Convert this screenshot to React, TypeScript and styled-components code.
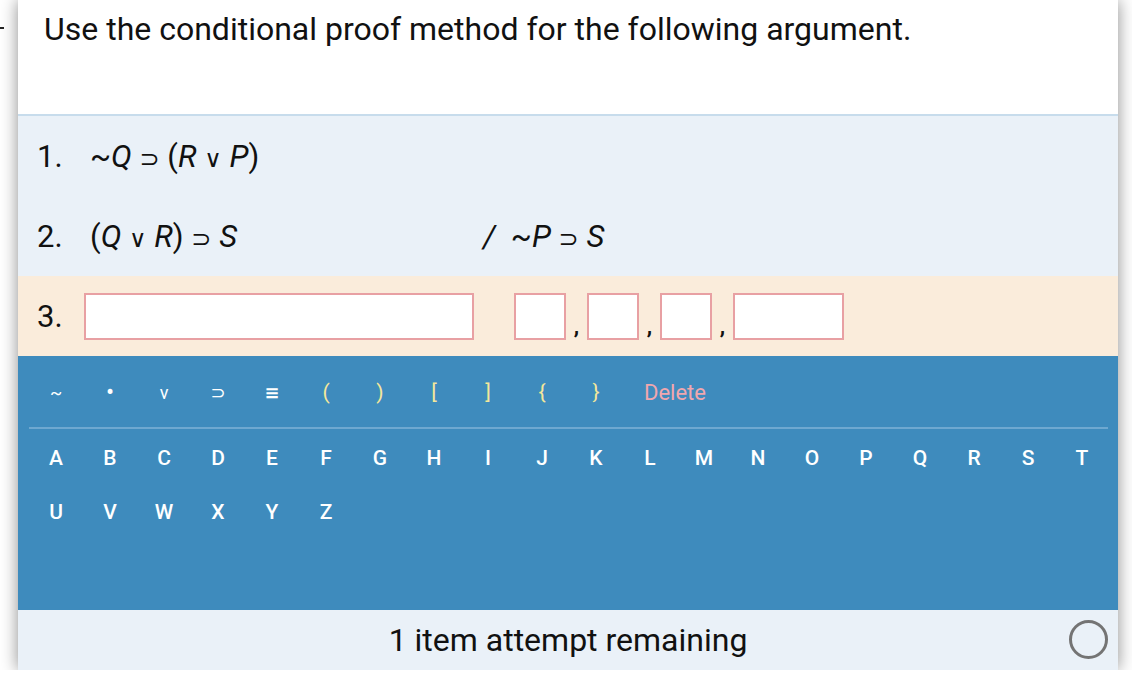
import React from "react";
import styled, { createGlobalStyle } from "styled-components";

const Global = createGlobalStyle`
  html, body { margin: 0; padding: 0; background: #ffffff; }
  body { font-family: Roboto, "Noto Sans", "DejaVu Sans", sans-serif; color: #111; }
`;

const Card = styled.div`
  width: 1100px;
  margin-left: 18px;
  background: #fff;
  box-shadow: 0 0 16px rgba(0, 0, 0, 0.45);
`;

const Header = styled.div`
  height: 116px;
  padding: 10px 0 0 26px;
  box-sizing: border-box;
  font-size: 32px;
  border-bottom: 2px solid #c7dcec;
`;

const PremiseRow = styled.div<{ $bg: string }>`
  height: 80px;
  display: flex;
  align-items: center;
  background: ${(p) => p.$bg};
  padding-left: 19px;
  font-size: 31px;
`;

const Num = styled.span`
  width: 47px;
  flex: none;
`;

const Formula = styled.span<{ $w?: number }>`
  width: ${(p) => (p.$w ? `${p.$w}px` : "auto")};
  margin-left: 6px;
  flex: none;
  white-space: pre;
`;

const Conclusion = styled.span`
  flex: none;
  white-space: pre;
`;

const V = styled.i`
  font-style: italic;
`;

const Op = styled.span`
  font-family: "DejaVu Sans", sans-serif;
  font-size: 24px;
`;

const Box = styled.div<{ $w: number }>`
  width: ${(p) => p.$w}px;
  height: 47px;
  box-sizing: border-box;
  border: 2px solid #e8a0a3;
  background: #fff;
  flex: none;
`;

const Comma = styled.span`
  width: 21px;
  text-align: center;
  font-size: 22px;
  font-weight: 700;
  align-self: flex-end;
  padding-bottom: 17px;
  flex: none;
`;

const Gap = styled.div<{ $w: number }>`
  width: ${(p) => p.$w}px;
  flex: none;
`;

const Keyboard = styled.div`
  height: 254px;
  box-sizing: border-box;
  background: #3e8bbd;
  padding: 18px 10px 0 11px;
`;

const KeyRow = styled.div<{ $h: number }>`
  display: flex;
  height: ${(p) => p.$h}px;
  align-items: center;
`;

const Sep = styled.div`
  height: 2px;
  background: #6ea8d0;
  margin: 17px 0 2px;
`;

const Key = styled.div<{ $c?: string; $w?: number; $fs?: number; $fw?: number }>`
  width: ${(p) => p.$w ?? 54}px;
  flex: none;
  text-align: center;
  color: ${(p) => p.$c ?? "#fff"};
  font-size: ${(p) => p.$fs ?? 21}px;
  font-weight: ${(p) => p.$fw ?? 500};
`;

const Footer = styled.div`
  height: 60px;
  background: #eaf1f8;
  display: flex;
  align-items: center;
  justify-content: center;
  position: relative;
  font-size: 32px;
`;

const Ring = styled.div`
  position: absolute;
  right: 10px;
  top: 10px;
  width: 39px;
  height: 39px;
  box-sizing: border-box;
  border: 3.5px solid #747474;
  border-radius: 50%;
`;

const Tick = styled.div`
  position: absolute;
  left: 0;
  top: 27px;
  width: 4px;
  height: 2px;
  background: #222;
`;

const symbols = ["~", "•", "v", "⊃", "≡"];
const brackets = ["(", ")", "[", "]", "{", "}"];
const row1 = "ABCDEFGHIJKLMNOPQRST".split("");
const row2 = "UVWXYZ".split("");

export default function App() {
  return (
    <>
      <Global />
      <Tick />
      <Card>
        <Header>Use the conditional proof method for the following argument.</Header>
        <PremiseRow $bg="#eaf1f8">
          <Num>1.</Num>
          <Formula>
            ~<V>Q</V> <Op>⊃</Op> (<V>R</V> <Op>∨</Op> <V>P</V>)
          </Formula>
        </PremiseRow>
        <PremiseRow $bg="#eaf1f8">
          <Num>2.</Num>
          <Formula $w={393}>
            (<V>Q</V> <Op>∨</Op> <V>R</V>) <Op>⊃</Op> <V>S</V>
          </Formula>
          <Conclusion>
            <V>/</V>  ~<V>P</V> <Op>⊃</Op> <V>S</V>
          </Conclusion>
        </PremiseRow>
        <PremiseRow $bg="#faecdb">
          <Num>3.</Num>
          <Box $w={390} />
          <Gap $w={40} />
          <Box $w={52} />
          <Comma>,</Comma>
          <Box $w={52} />
          <Comma>,</Comma>
          <Box $w={52} />
          <Comma>,</Comma>
          <Box $w={111} />
        </PremiseRow>
        <Keyboard>
          <KeyRow $h={36}>
            {symbols.map((s) => (
              <Key key={s} $fs={s === "•" ? 24 : 18} $fw={s === "≡" ? 700 : 400}>
                {s}
              </Key>
            ))}
            {brackets.map((s) => (
              <Key key={s} $c="#f3e79b" $fs={21} $fw={400}>
                {s}
              </Key>
            ))}
            <Key $c="#f0a7ae" $w={104} $fs={22} $fw={400}>
              Delete
            </Key>
          </KeyRow>
          <Sep />
          <KeyRow $h={54}>
            {row1.map((l) => (
              <Key key={l}>{l}</Key>
            ))}
          </KeyRow>
          <KeyRow $h={54}>
            {row2.map((l) => (
              <Key key={l}>{l}</Key>
            ))}
          </KeyRow>
        </Keyboard>
        <Footer>
          1 item attempt remaining
          <Ring />
        </Footer>
      </Card>
    </>
  );
}
